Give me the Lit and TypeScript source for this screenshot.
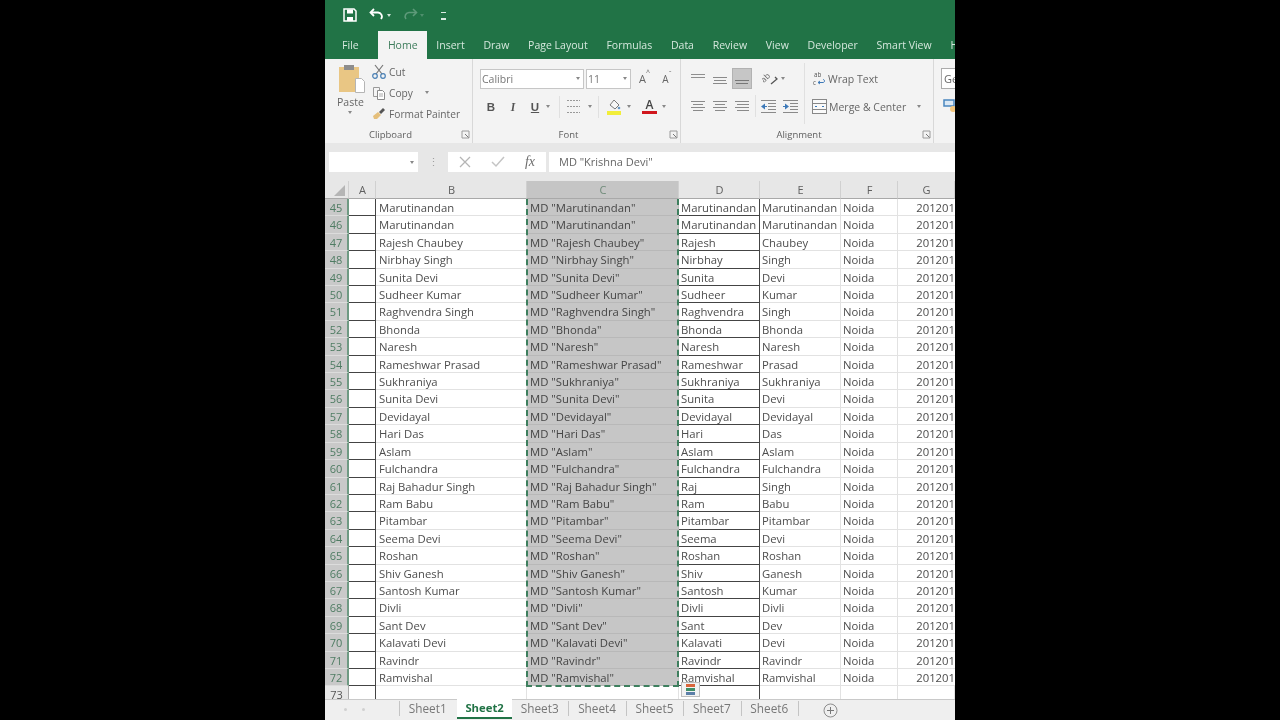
import { LitElement, html, css, svg } from 'lit'
import { customElement } from 'lit/decorators.js'

const NAMES = [
  'Marutinandan', 'Marutinandan', 'Rajesh Chaubey', 'Nirbhay Singh', 'Sunita Devi', 'Sudheer Kumar',
  'Raghvendra Singh', 'Bhonda', 'Naresh', 'Rameshwar Prasad', 'Sukhraniya', 'Sunita Devi', 'Devidayal',
  'Hari Das', 'Aslam', 'Fulchandra', 'Raj Bahadur Singh', 'Ram Babu', 'Pitambar', 'Seema Devi', 'Roshan',
  'Shiv Ganesh', 'Santosh Kumar', 'Divli', 'Sant Dev', 'Kalavati Devi', 'Ravindr', 'Ramvishal',
]
const TABS = ['File', 'Home', 'Insert', 'Draw', 'Page Layout', 'Formulas', 'Data', 'Review', 'View', 'Developer', 'Smart View', 'H']
const COLS = ['A', 'B', 'C', 'D', 'E', 'F', 'G']
const SHEETS = ['Sheet1', 'Sheet2', 'Sheet3', 'Sheet4', 'Sheet5', 'Sheet7', 'Sheet6']

const icon = (w: number, h: number, body: unknown) =>
  html`<svg width=${w} height=${h} viewBox="0 0 ${w} ${h}" fill="none">${body}</svg>`

const lines = (rows: [number, number][], color = '#8a8a8a') =>
  icon(16, 14, rows.map(([x, w], i) => svg`<rect x=${x} y=${2 + i * 3} width=${w} height="1" fill=${color} />`))

const caret = html`<span class="caret"></span>`
const launcher = icon(9, 9, svg`<path d="M1 1h7v7M1 1v7h7" stroke="#9a9a9a" /><path d="M4 4l3.5 3.5" stroke="#777" />`)

const ICONS = {
  save: icon(14, 14, svg`<path d="M1 1h10l2 2v10H1z" stroke="#fff" stroke-width="1.5" /><rect x="4" y="1.5" width="6" height="4" fill="#fff" /><rect x="4" y="9" width="6" height="4" fill="#fff" />`),
  undo: icon(15, 13, svg`<path d="M5 1L1.5 4.5 5 8" stroke="#fff" stroke-width="1.8" /><path d="M2 4.5h6.5a4 4 0 0 1 3.5 6.5" stroke="#fff" stroke-width="1.8" />`),
  redo: icon(15, 13, svg`<path d="M10 1l3.5 3.5L10 8" stroke="#5e9a7a" stroke-width="1.6" /><path d="M13 4.5H6.5A4 4 0 0 0 3 11" stroke="#5e9a7a" stroke-width="1.6" />`),
  paste: icon(30, 30, svg`<rect x="0" y="3" width="20" height="25" fill="#e9c684" /><rect x="5" y="1" width="10" height="5" fill="#8d8d8d" /><path d="M16.500 14.500h6l3 3v11h-9z" fill="#fff" stroke="#b5b5b5" />`),
  cut: icon(14, 15, svg`<path d="M3 1l7 9M11 1L4 10" stroke="#777" stroke-width="1.2" /><circle cx="3" cy="12" r="2.300" stroke="#4a80b5" stroke-width="1.200" /><circle cx="11" cy="12" r="2.300" stroke="#4a80b5" stroke-width="1.200" />`),
  copy: icon(14, 14, svg`<path d="M1.500 1.500h6v9h-6z" fill="#f5f5f5" stroke="#9a9a9a" /><path d="M5.500 4.500h5l2 2v7h-7z" fill="#fff" stroke="#8a8a8a" /><path d="M7 8h4M7 10h4" stroke="#aaa" />`),
  painter: icon(14, 13, svg`<path d="M1 9l5-4 3 3-4 4H2z" fill="#e5bf7b" /><path d="M7 5l4-4 2 2-4 4z" fill="#555" />`),
  grow: html`<span class="font-a">A<i>^</i></span>`,
  shrink: html`<span class="font-a small">A<i>ˇ</i></span>`,
  borders: icon(15, 15, svg`<path d="M1 1.500h13M1 7.500h13M1 13.500h13" stroke="#999" stroke-dasharray="2 1" />`),
  fill: icon(16, 16, svg`<path d="M8 1l5 5-4 4-5-4z" fill="#f6f6f6" stroke="#7a7a7a" /><circle cx="13" cy="9" r="1.300" fill="#6c9ac4" /><rect x="1" y="12" width="14" height="4" fill="#f2ee3a" />`),
  color: html`<span class="font-color">A</span>`,
  orient: icon(17, 16, svg`<text x="2" y="12" font-size="8" fill="#666" font-family="Open Sans" transform="rotate(-45 2 12)">ab</text><path d="M9 13l6-5-2-2" stroke="#555" stroke-width="1.300" />`),
  indentL: icon(15, 14, svg`<path d="M0 1.500h15M7 4.500h8M7 7.500h8M7 10.500h8M0 13.500h15" stroke="#8a8a8a" /><path d="M0 7.500l4-3v6z" fill="#3d79b8" /><path d="M3 7.500h3" stroke="#3d79b8" />`),
  indentR: icon(15, 14, svg`<path d="M0 1.500h15M7 4.500h8M7 7.500h8M7 10.500h8M0 13.500h15" stroke="#8a8a8a" /><path d="M6 7.500l-4-3v6z" fill="#3d79b8" /><path d="M0 7.500h3" stroke="#3d79b8" />`),
  wrap: icon(14, 17, svg`<text x="2" y="6.500" font-size="6.200" fill="#555" font-family="Open Sans">ab</text><text x="1" y="15" font-size="6.200" fill="#555" font-family="Open Sans">c</text><path d="M6 12.500h5c2 0 2-3 0-3" stroke="#3d79b8" /><path d="M8 11l-2 1.500L8 14" stroke="#3d79b8" />`),
  merge: icon(15, 15, svg`<rect x="0.500" y="0.500" width="14" height="14" stroke="#888" fill="#fafafa" /><path d="M0 4.500h15M0 10.500h15" stroke="#888" /><path d="M3 7.500h2M10 7.500h2" stroke="#3d79b8" />`),
  numberFmt: icon(14, 14, svg`<rect x="1" y="1" width="10" height="6" stroke="#4a86bf" stroke-width="1.500" fill="#dbe8f4" /><circle cx="10" cy="10" r="3" fill="#f3c67e" />`),
}

@customElement('app-root')
export class AppRoot extends LitElement {
  static styles = css`
    :host {
      display: block;
      width: 1280px;
      height: 720px;
      background: #000;
      font-family: 'Open Sans', 'Liberation Sans', sans-serif;
      color: #555;
    }
    .app {
      width: 630px;
      height: 720px;
      margin-left: 325px;
      display: flex;
      flex-direction: column;
      overflow: hidden;
      background: #e7e7e7;
      filter: blur(0.35px);
    }

    /* title + tabs */
    .titlebar {
      flex: none;
      height: 59px;
      background: #217346;
      display: flex;
      flex-direction: column;
    }
    .qat {
      height: 31px;
      display: flex;
      align-items: center;
      padding: 0 0 2px 18px;
      box-sizing: border-box;
      gap: 12px;
    }
    .qat .down {
      width: 0;
      height: 0;
      border: 2.5px solid transparent;
      border-top: 3px solid #cfe3d8;
      margin: 3px 0 0 -9px;
    }
    .qat .down.dim {
      border-top-color: #4f8f6d;
      margin-left: -10px;
      margin-right: 5px;
    }
    .qat .custom {
      width: 5px;
      height: 5px;
      border-top: 1px solid #dcebe3;
      border-bottom: 2px solid #dcebe3;
      margin-top: 2px;
    }
    .tabs {
      height: 28px;
      display: flex;
      padding-left: 7.700px;
      white-space: nowrap;
    }
    .tab {
      font-size: 10.500px;
      line-height: 28px;
      color: #d5e8dd;
      padding: 0 9.400px;
    }
    .tab.active {
      background: #f3f3f3;
      color: #3d7c5b;
      margin-left: 10.400px;
    }

    /* ribbon */
    .ribbon {
      flex: none;
      height: 84px;
      background: #f3f3f3;
      display: flex;
      font-size: 11px;
      color: #666;
      white-space: nowrap;
    }
    .group {
      flex: none;
      box-sizing: border-box;
      border-right: 1px solid #d8d8d8;
      display: flex;
      flex-direction: column;
    }
    .group-body {
      flex: 1;
      display: flex;
    }
    .group-foot {
      height: 18px;
      display: grid;
      grid-template-columns: 1fr 9px;
      align-items: center;
      padding: 0 2px 0 0;
      font-size: 9.500px;
      text-align: center;
      color: #606060;
    }
    .group-foot span { padding-right: 5px; }
    .clipboard { width: 148px; }
    .font { width: 208px; }
    .alignment { width: 253px; }
    .number { flex: 1; border-right: 0; padding: 9px 0 0 7px; overflow: hidden; }

    .paste {
      width: 47px;
      padding: 5px 0 0 14px;
      box-sizing: border-box;
      display: flex;
      flex-direction: column;
      font-size: 10.500px;
    }
    .paste svg { margin-bottom: -2px; }
    .paste span { margin: 3px 0 0 -2px; line-height: 14px; }
    .paste .caret { margin: 2px 0 0 9px; }
    .clip-list {
      display: flex;
      flex-direction: column;
      padding-top: 2px;
      gap: 0;
    }
    .clip-item {
      height: 21px;
      display: flex;
      align-items: center;
      gap: 3px;
      font-size: 10.200px;
    }
    .clip-item .caret { margin-left: 9px; }
    .caret {
      display: inline-block;
      width: 0;
      height: 0;
      border: 2.5px solid transparent;
      border-top: 3px solid #888;
      border-bottom: 0;
    }

    .font-body {
      flex-direction: column;
      padding: 9px 0 0 7px;
      gap: 7px;
    }
    .row {
      display: flex;
      align-items: center;
      height: 21px;
    }
    .select {
      box-sizing: border-box;
      height: 20px;
      background: #fff;
      border: 1px solid #c6c6c6;
      display: flex;
      align-items: center;
      justify-content: space-between;
      padding: 0 3px 0 1px;
      font-size: 10.500px;
      color: #777;
    }
    .select.name { width: 104px; margin-right: 2px; }
    .select.size { width: 45px; }
    .font-a {
      font-size: 11px;
      color: #666;
      width: 23px;
      text-align: center;
      position: relative;
    }
    .font-a.small { font-size: 10px; }
    .font-a i { font-size: 7px; position: absolute; top: -3px; margin-left: 0; font-style: normal; }
    .style-btn {
      width: 22px;
      text-align: center;
      font-size: 11.500px;
      font-family: 'Liberation Serif', serif;
      font-weight: 700;
      color: #555;
    }
    .style-btn.sans { font-family: 'Liberation Sans', sans-serif; }
    .style-btn.i { font-style: italic; }
    .style-btn.u { text-decoration: underline; font-family: 'Liberation Sans', sans-serif; }
    .font-color {
      display: block;
      width: 15px;
      text-align: center;
      font-size: 12px;
      font-weight: 600;
      line-height: 12px;
      color: #444;
      border-bottom: 3px solid #d0161d;
    }
    .vsep { width: 1px; height: 22px; background: #e0e0e0; }

    .align-col {
      display: grid;
      grid-template-columns: repeat(3, 22px) 4px repeat(2, 22px);
      grid-auto-rows: 21px;
      row-gap: 6px;
      padding: 9px 0 0 6px;
      align-items: center;
      justify-items: center;
      width: 123px;
      box-sizing: border-box;
    }
    .align-col .selected {
      width: 20px;
      height: 21px;
      background: #c6c6c6;
      border: 1px solid #b2b2b2;
      box-sizing: border-box;
      display: flex;
      align-items: center;
      justify-content: center;
    }
    .orient {
      grid-column: 5 / span 2;
      display: flex;
      align-items: center;
      gap: 2px;
      justify-self: start;
      padding-left: 5px;
    }
    .wrap-col {
      border-left: 1px solid #e0e0e0;
      margin-top: 4px;
      padding: 5px 0 0 7px;
      display: flex;
      flex-direction: column;
      gap: 7px;
      font-size: 10.500px;
      height: 56px;
    }
    .wrap-item {
      display: flex;
      align-items: center;
      height: 21px;
      gap: 2px;
    }
    .wrap-item .caret { margin-left: 9px; }
    .number-box {
      box-sizing: border-box;
      width: 40px;
      height: 21px;
      background: #fff;
      border: 1px solid #ababab;
      font-size: 11px;
      line-height: 19px;
      padding-left: 2px;
    }
    .number-icon {
      margin-top: 10px;
      margin-left: 2px;
    }

    /* formula bar */
    .formula {
      flex: none;
      height: 38px;
      box-sizing: border-box;
      background: #e7e7e7;
      display: flex;
      padding: 9px 0 9px 4px;
      align-items: stretch;
    }
    .namebox {
      width: 89px;
      background: #fff;
      display: flex;
      align-items: center;
      justify-content: flex-end;
      padding-right: 4px;
      box-sizing: border-box;
    }
    .grip {
      width: 30px;
      text-align: center;
      color: #a0a0a0;
      font-size: 11px;
      line-height: 19px;
    }
    .fx-btns {
      width: 98px;
      margin-right: 3px;
      background: #fff;
      display: grid;
      grid-template-columns: 33px 33px 32px;
      align-items: center;
      justify-items: center;
    }
    .fx {
      font-family: 'Liberation Serif', serif;
      font-style: italic;
      font-size: 14px;
      color: #6d6d6d;
    }
    .formula-input {
      flex: 1;
      background: #fff;
      font-size: 11px;
      line-height: 20px;
      padding-left: 10px;
      color: #666;
    }

    /* sheet */
    .sheet {
      flex: none;
      height: 518px;
      overflow: hidden;
      position: relative;
      background: #fff;
      font-size: 11.300px;
      color: #4d4d4d;
    }
    .grid {
      display: grid;
      grid-template-columns: 24px 27px 151px 152px 81px 81px 57px 57px;
      grid-auto-rows: 17.407px;
    }
    .col-head {
      height: 18px;
      background: #e7e7e7;
      border-right: 1px solid #d0d0d0;
      border-bottom: 1px solid #a9a9a9;
      box-sizing: border-box;
      text-align: center;
      font-size: 11px;
      line-height: 17px;
      padding-left: 1px;
      color: #606060;
    }
    .col-head.sel { background: #c5c5c5; color: #6f8b79; }
    .corner { position: relative; }
    .corner::after {
      content: '';
      position: absolute;
      right: 3px;
      bottom: 2px;
      border-style: solid;
      border-width: 0 0 11px 11px;
      border-color: transparent transparent #b5b5b5 transparent;
    }
    .head-row {
      display: grid;
      grid-template-columns: 24px 27px 151px 152px 81px 81px 57px 57px;
    }
    .row-num {
      background: #c9c9c9;
      color: #4f7c63;
      text-align: center;
      font-size: 11px;
      line-height: 17px;
      border-right: 2px solid #6f9a83;
      box-sizing: border-box;
      border-bottom: 1px solid #dcdcdc;
    }
    .row-num.plain { background: #e7e7e7; color: #555; border-right: 1px solid #a9a9a9; }
    .cell {
      box-sizing: border-box;
      border-right: 1px solid #e2e2e2;
      border-bottom: 1px solid #e2e2e2;
      padding-left: 3px;
      line-height: 17px;
      overflow: hidden;
      white-space: nowrap;
    }
    .cell.c { background: #c6c6c6; border-color: #b8b8b8; color: #454545; }
    .cell.a { border-right: 1px solid #444; border-bottom: 1px solid #444; }
    .cell.d { border-right: 1px solid #444; border-bottom: 1px solid #444; padding-left: 2px; }
    .cell.e { padding-left: 2px; }
    .cell.num { text-align: right; border-right: 0; padding-left: 0; }
    .ants {
      position: absolute;
      left: 201px;
      top: 18px;
      width: 153px;
      height: 488px;
      box-sizing: border-box;
      border: 2px dashed #3e7f5e;
      border-top: 0;
      pointer-events: none;
    }
    .paste-tag {
      position: absolute;
      left: 356px;
      top: 501px;
      width: 19px;
      height: 15px;
      box-sizing: border-box;
      background: #f2f2f2;
      border: 1px solid #bdbdbd;
      display: flex;
      align-items: center;
      justify-content: center;
    }

    /* sheet tabs */
    .sheetbar {
      flex: none;
      height: 21px;
      background: #efefef;
      border-top: 1px solid #c9c9c9;
      box-sizing: border-box;
      display: flex;
      align-items: stretch;
      font-size: 11.800px;
      color: #777;
    }
    .nav {
      width: 74px;
      flex: none;
      display: flex;
      gap: 15px;
      padding: 8px 0 0 19px;
      box-sizing: border-box;
    }
    .nav span { width: 3px; height: 3px; background: #d0d0d0; border-radius: 50%; }
    .sheet-tab {
      padding: 0 9.700px 0 8.800px;
      position: relative;
      border-left: 1px solid #c4c4c4;
      height: 15px;
      margin-top: 1px;
      line-height: 14px;
    }
    .sheet-tab:first-of-type { padding-left: 8.300px; }
    .sheet-tab.active {
      height: 20px;
      margin-top: -1px;
      background: #fff;
      color: #217346;
      font-weight: 700;
      font-size: 11.300px;
      line-height: 18px;
      border: 0;
      border-bottom: 2px solid #217346;
      box-sizing: border-box;
      padding: 0 8px;
      margin-left: 1px;
      margin-right: 0;
    }
    .sheet-tab.active + .sheet-tab { border-left: 0; padding-left: 9px; }
    .add {
      margin-left: 24px;
      margin-top: 3px;
    }
  `

  private ribbon() {
    return html`
      <div class="ribbon">
        <div class="group clipboard">
          <div class="group-body">
            <div class="paste">${ICONS.paste}<span>Paste</span>${caret}</div>
            <div class="clip-list">
              <div class="clip-item">${ICONS.cut}<span>Cut</span></div>
              <div class="clip-item">${ICONS.copy}<span>Copy</span>${caret}</div>
              <div class="clip-item">${ICONS.painter}<span>Format Painter</span></div>
            </div>
          </div>
          <div class="group-foot"><span>Clipboard</span>${launcher}</div>
        </div>
        <div class="group font">
          <div class="group-body font-body">
            <div class="row">
              <div class="select name"><span>Calibri</span>${caret}</div>
              <div class="select size"><span>11</span>${caret}</div>
              ${ICONS.grow}${ICONS.shrink}
            </div>
            <div class="row">
              <span class="style-btn sans">B</span>
              <span class="style-btn i">I</span>
              <span class="style-btn u">U</span>
              ${caret}
              <span style="width:9px"></span><span class="vsep"></span><span style="width:6px"></span>
              ${ICONS.borders}<span style="width:7px"></span>${caret}
              <span style="width:6px"></span><span class="vsep"></span><span style="width:7px"></span>
              ${ICONS.fill}<span style="width:5px"></span>${caret}
              <span style="width:11px"></span>${ICONS.color}<span style="width:5px"></span>${caret}
            </div>
          </div>
          <div class="group-foot"><span>Font</span>${launcher}</div>
        </div>
        <div class="group alignment">
          <div class="group-body">
            <div class="align-col">
              ${lines([[1, 14], [1, 14]], '#8f8f8f')}
              ${lines([[0, 0], [1, 14], [2, 12], [1, 14]])}
              <div class="selected">${lines([[0, 0], [0, 0], [1, 14], [2, 12]], '#777')}</div>
              <span></span>
              <div class="orient">${ICONS.orient}${caret}</div>
              ${lines([[1, 14], [3, 10], [1, 14], [3, 10]])}
              ${lines([[1, 14], [3, 10], [1, 14], [3, 10]])}
              ${lines([[1, 14], [3, 12], [1, 14], [3, 12]])}
              <span class="vsep"></span>
              ${ICONS.indentL}${ICONS.indentR}
            </div>
            <div class="wrap-col">
              <div class="wrap-item">${ICONS.wrap}<span>Wrap Text</span></div>
              <div class="wrap-item">${ICONS.merge}<span>Merge &amp; Center</span>${caret}</div>
            </div>
          </div>
          <div class="group-foot"><span>Alignment</span>${launcher}</div>
        </div>
        <div class="group number">
          <div class="number-box">General</div>
          <div class="number-icon">${ICONS.numberFmt}</div>
        </div>
      </div>
    `
  }

  private sheet() {
    return html`
      <div class="sheet">
        <div class="head-row">
          <div class="col-head corner"></div>
          ${COLS.map((c) => html`<div class="col-head ${c === 'C' ? 'sel' : ''}">${c}</div>`)}
        </div>
        <div class="grid">
          ${NAMES.map((name, i) => {
            const parts = name.split(' ')
            return html`
              <div class="row-num">${45 + i}</div>
              <div class="cell a"></div>
              <div class="cell">${name}</div>
              <div class="cell c">MD "${name}"</div>
              <div class="cell d">${parts[0]}</div>
              <div class="cell e">${parts[parts.length - 1]}</div>
              <div class="cell e">Noida</div>
              <div class="cell num">201201</div>
            `
          })}
          <div class="row-num plain">73</div>
          <div class="cell a"></div>
          <div class="cell"></div>
          <div class="cell"></div>
          <div class="cell d"></div>
          <div class="cell"></div>
          <div class="cell"></div>
          <div class="cell"></div>
        </div>
        <div class="ants"></div>
        <div class="paste-tag">
          ${icon(11, 11, svg`<rect x="1" y="0" width="9" height="3" fill="#d9663c" /><rect x="1" y="4" width="9" height="3" fill="#3f8f66" /><rect x="1" y="8" width="9" height="3" fill="#5c7fa8" />`)}
        </div>
      </div>
    `
  }

  render() {
    return html`
      <div class="app">
        <div class="titlebar">
          <div class="qat">
            ${ICONS.save}${ICONS.undo}<span class="down"></span>${ICONS.redo}<span class="down dim"></span><span class="custom"></span>
          </div>
          <div class="tabs">
            ${TABS.map((t) => html`<div class="tab ${t === 'Home' ? 'active' : ''}">${t}</div>`)}
          </div>
        </div>
        ${this.ribbon()}
        <div class="formula">
          <div class="namebox">${caret}</div>
          <div class="grip">⋮</div>
          <div class="fx-btns">
            ${icon(12, 12, svg`<path d="M1 1l10 10M11 1L1 11" stroke="#b5b5b5" stroke-width="1.300" />`)}
            ${icon(14, 12, svg`<path d="M1 6l4 4 8-9" stroke="#c4c4c4" stroke-width="1.500" />`)}
            <span class="fx">fx</span>
          </div>
          <div class="formula-input">MD "Krishna Devi"</div>
        </div>
        ${this.sheet()}
        <div class="sheetbar">
          <div class="nav"><span></span><span></span></div>
          ${SHEETS.map((s) => html`<div class="sheet-tab ${s === 'Sheet2' ? 'active' : ''}">${s}</div>`)}
          <div class="sheet-tab" style="padding:0"></div>
          <div class="add">
            ${icon(15, 15, svg`<circle cx="7.500" cy="7.500" r="6.500" stroke="#8d8d8d" /><path d="M7.500 4v7M4 7.500h7" stroke="#777" />`)}
          </div>
        </div>
      </div>
    `
  }
}
